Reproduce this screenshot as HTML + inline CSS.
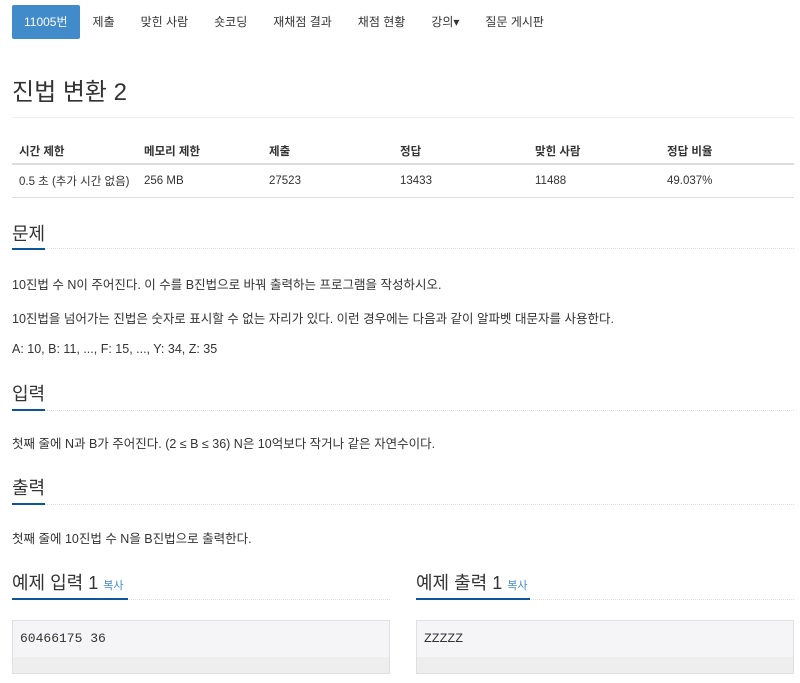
<!DOCTYPE html>
<html><head><meta charset="utf-8"><style>
body{margin:0;width:800px;height:683px;overflow:hidden;background:#fff;font-family:"Liberation Sans","Noto Sans CJK KR",sans-serif;color:#333;font-size:13px}
.nav{position:absolute;top:5px;left:12px;height:34px;display:flex}
.nav div{padding:0 13px;line-height:34px;font-size:12px;color:#333;white-space:nowrap}
.nav .a{background:#428bca;color:#fff;border-radius:2px;padding:0 12px}
h1{position:absolute;left:12px;top:72px;margin:0;font-size:24px;font-weight:normal}
.hr{position:absolute;left:12px;width:782px;height:1px;background:#eee}
table{position:absolute;left:12px;top:138px;width:782px;border-collapse:collapse;font-size:11.5px}
th{text-align:left;padding:0 7px;height:25px;border-bottom:2px solid #ddd;font-weight:bold}
td{padding:0 7px;height:32px;border-bottom:1px solid #ddd}
.h{position:absolute;left:12px;font-size:18px}
.ul{position:absolute;height:2px;background:#0d5596}
.ln{position:absolute;height:1px;border-top:1px dotted #ddd}
.p{position:absolute;left:12px;font-size:12.5px}
.box{position:absolute;top:620px;height:52px;background:#f5f5f7;border:1px solid #e0e0e0}
.box pre{margin:0;padding:10px 7px;font-family:"Liberation Mono",monospace;font-size:13px}
.sb{position:absolute;left:0;right:0;bottom:0;height:16px;background:#eee}
</style></head><body>
<div class="nav"><div class="a">11005번</div><div>제출</div><div>맞힌 사람</div><div>숏코딩</div><div>재채점 결과</div><div>채점 현황</div><div>강의▾</div><div>질문 게시판</div></div>
<h1>진법 변환 2</h1>
<div class="hr" style="top:117px"></div>
<table><tr><th style="width:111px">시간 제한</th><th style="width:111px">메모리 제한</th><th style="width:117px">제출</th><th style="width:121px">정답</th><th style="width:118px">맞힌 사람</th><th>정답 비율</th></tr>
<tr><td>0.5 초 (추가 시간 없음)</td><td>256 MB</td><td>27523</td><td>13433</td><td>11488</td><td>49.037%</td></tr></table>
<div class="h" style="top:220px">문제</div><div class="ln" style="left:12px;width:782px;top:248px"></div><div class="ul" style="left:12px;width:33px;top:248px"></div>
<div class="p" style="top:274px">10진법 수 N이 주어진다. 이 수를 B진법으로 바꿔 출력하는 프로그램을 작성하시오.</div>
<div class="p" style="top:308px">10진법을 넘어가는 진법은 숫자로 표시할 수 없는 자리가 있다. 이런 경우에는 다음과 같이 알파벳 대문자를 사용한다.</div>
<div class="p" style="top:342px">A: 10, B: 11, ..., F: 15, ..., Y: 34, Z: 35</div>
<div class="h" style="top:380px">입력</div><div class="ln" style="left:12px;width:782px;top:410px"></div><div class="ul" style="left:12px;width:33px;top:409px"></div>
<div class="p" style="top:433px">첫째 줄에 N과 B가 주어진다. (2 ≤ B ≤ 36) N은 10억보다 작거나 같은 자연수이다.</div>
<div class="h" style="top:474px">출력</div><div class="ln" style="left:12px;width:782px;top:504px"></div><div class="ul" style="left:12px;width:33px;top:503px"></div>
<div class="p" style="top:528px">첫째 줄에 10진법 수 N을 B진법으로 출력한다.</div>
<div class="h" style="top:569px">예제 입력 1 <span style="font-size:11px;color:#428bca">복사</span></div><div class="ln" style="left:12px;width:378px;top:599px"></div><div class="ul" style="left:12px;width:116px;top:598px"></div>
<div class="h" style="top:569px;left:416px">예제 출력 1 <span style="font-size:11px;color:#428bca">복사</span></div><div class="ln" style="left:416px;width:378px;top:599px"></div><div class="ul" style="left:416px;width:114px;top:598px"></div>
<div class="box" style="left:12px;width:376px"><pre>60466175 36</pre><div class="sb"></div></div>
<div class="box" style="left:416px;width:376px"><pre>ZZZZZ</pre><div class="sb"></div></div>
</body></html>
